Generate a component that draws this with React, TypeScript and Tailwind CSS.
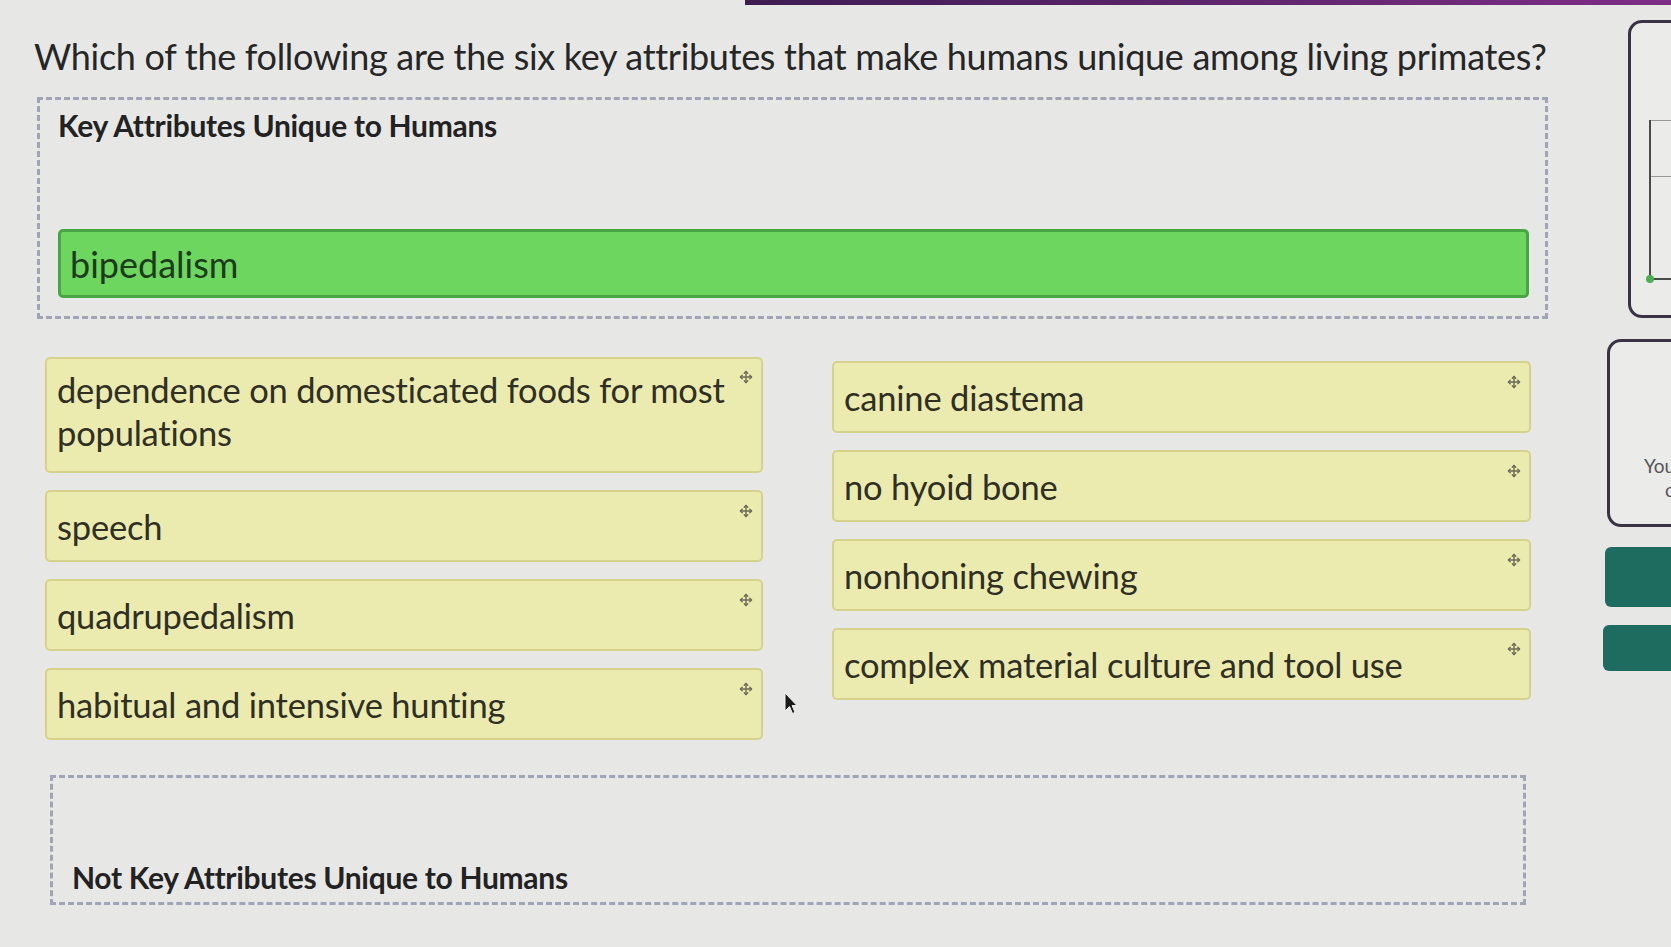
import React from 'react'

const FONT = { fontFamily: 'Lato, "Open Sans", "Liberation Sans", sans-serif' }

const leftItems = [
    'dependence on domesticated foods for most populations',
    'speech',
    'quadrupedalism',
    'habitual and intensive hunting',
]

const rightItems = [
    'canine diastema',
    'no hyoid bone',
    'nonhoning chewing',
    'complex material culture and tool use',
]

// little four-way drag handle in the card corner
const MoveIcon = () => (
    <svg width="14" height="14" viewBox="0 0 14 14" fill="none" stroke="#6b6a55" strokeWidth="1.4" strokeLinecap="round" strokeLinejoin="round">
        <path d="M7 1.5v11M1.5 7h11" />
        <path d="M5.3 3.2 7 1.5l1.7 1.7M5.3 10.8 7 12.5l1.7-1.7M3.2 5.3 1.5 7l1.7 1.7M10.8 5.3 12.5 7l-1.7 1.7" />
    </svg>
)

const Card = ({ label, tall }: { label: string; tall?: boolean }) => (
    <div
        className={`flex justify-between gap-[4px] rounded-[5px] border-2 border-[#d6d28c] bg-[#ebeaaf] pl-[10px] pr-[8px] ${tall ? 'h-[116px] items-start pt-[9px]' : 'h-[72px] items-center'}`}>
        <span className="text-[34.5px] leading-[43px] text-[#2f2f24] tracking-[-0.2px]">{label}</span>
        <span className={`shrink-0 self-start ${tall ? 'mt-[2px]' : 'mt-[12px]'}`}>
            <MoveIcon />
        </span>
    </div>
)

export default function App() {
    return (
        <div className="relative flex h-[947px] w-[1671px] overflow-hidden bg-[#e7e8e6]" style={FONT}>
            <div className="absolute left-[745px] top-0 h-[5px] w-[926px] bg-gradient-to-r from-[#3e1d52] to-[#7e2d86]" />

            {/* main question column */}
            <div className="flex w-[1600px] shrink-0 flex-col pl-[34px] pt-[31px]">
                <h1 className="text-[36px] leading-[50px] text-[#262626] tracking-[-0.3px]">
                    Which of the following are the six key attributes that make humans unique among living primates?
                </h1>

                <div className="ml-[3px] mt-[16px] flex h-[222px] w-[1511px] flex-col border-[3px] border-dashed border-[#a0a5b6] pl-[18px] pr-[16px] pt-[10px]">
                    <p className="text-[30px] font-bold leading-[30px] text-[#222] tracking-[-0.3px]">Key Attributes Unique to Humans</p>
                    <div className="mt-[89px] flex h-[69px] items-center rounded-[5px] border-[3px] border-[#47a544] bg-[#6dd65e] pl-[9px]">
                        <span className="text-[36px] text-[#1d3a1c]">bipedalism</span>
                    </div>
                </div>

                <div className="ml-[11px] mt-[38px] flex gap-[69px]">
                    <div className="flex w-[718px] flex-col gap-[17px]">
                        {leftItems.map((item, i) => (
                            <Card key={item} label={item} tall={i === 0} />
                        ))}
                    </div>
                    <div className="mt-[4px] flex w-[699px] flex-col gap-[17px]">
                        {rightItems.map((item) => (
                            <Card key={item} label={item} />
                        ))}
                    </div>
                </div>

                <div className="ml-[16px] mt-[35px] flex h-[130px] w-[1476px] flex-col justify-end border-[3px] border-dashed border-[#a0a5b6] pb-[10px] pl-[19px]">
                    <p className="text-[30px] font-bold leading-[30px] text-[#222] tracking-[-0.3px]">Not Key Attributes Unique to Humans</p>
                </div>
            </div>

            {/* right sidebar, cut off by the window */}
            <div className="flex w-[300px] shrink-0 flex-col pt-[20px]">
                <div className="ml-[28px] h-[298px] w-[260px] rounded-[14px] border-[3px] border-[#3a3346] bg-[#ebebea] pl-[18px] pt-[97px]">
                    <div className="relative h-[160px] w-[200px] border-l-2 border-b-2 border-[#4a4a4a]">
                        <div className="border-t border-[#9a9a9a] h-[56px]" />
                        <div className="border-t border-[#9a9a9a] h-[53px]" />
                        <div className="absolute -left-[5px] -bottom-[5px] h-[8px] w-[8px] rounded-full bg-[#4caf50]" />
                    </div>
                </div>

                <div className="ml-[7px] mt-[21px] flex h-[188px] w-[260px] flex-col rounded-[14px] border-[3px] border-[#3a3346] bg-[#ebebea] pt-[112px] text-[19px] leading-[24px] text-[#555]">
                    <span className="pl-[34px]">Your</span>
                    <span className="pl-[55px]">complete</span>
                </div>

                <div className="ml-[5px] mt-[20px] h-[60px] w-[260px] rounded-[6px] bg-[#1e6c60]" />
                <div className="ml-[3px] mt-[18px] h-[46px] w-[260px] rounded-[6px] bg-[#1e6c60]" />
            </div>

            {/* mouse pointer */}
            <svg className="absolute left-[784px] top-[692px]" width="14" height="24" viewBox="0 0 14 24">
                <path d="M1 1v18l4.5-4.5 3 7 2.6-1.1-3-6.8H13z" fill="#1a1a1a" stroke="#f4f4f4" strokeWidth="1" />
            </svg>
        </div>
    )
}
